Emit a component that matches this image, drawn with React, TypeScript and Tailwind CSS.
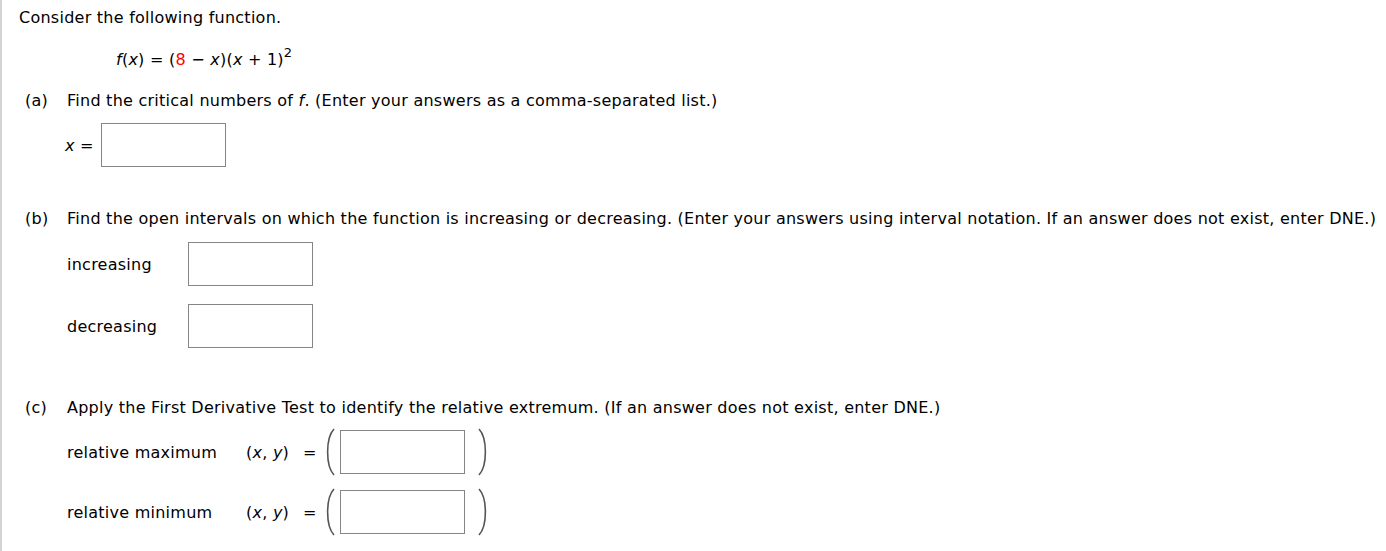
import React from 'react';

const font = { fontFamily: '"DejaVu Sans", Verdana, sans-serif' };

function Box({ className = '' }: { className?: string }) {
  return <div className={`h-[44px] w-[125px] border border-[#858585] bg-white ${className}`} />;
}

function Paren({ flip = false }: { flip?: boolean }) {
  return (
    <svg width="13" height="48" viewBox="0 0 13 48" className={flip ? '-scale-x-100' : ''}>
      <path d="M11 1 C 2.5 10, 2.5 38, 11 47" fill="none" stroke="#555" strokeWidth="1.6" />
    </svg>
  );
}

function Part({ tag, children }: { tag: string; children: React.ReactNode }) {
  return (
    <div className="flex h-[19px] items-center whitespace-nowrap pl-[23px]">
      <span className="w-[42px]">{tag}</span>
      <span>{children}</span>
    </div>
  );
}

function PointRow({ label }: { label: string }) {
  return (
    <div className="flex items-center pl-[65px]">
      <span className="w-[179px]">{label}</span>
      <span className="w-[57px]">
        (<i>x</i>, <i>y</i>)
      </span>
      <span className="w-[20px]">=</span>
      <Paren />
      <Box className="ml-[4px] mr-[12px]" />
      <Paren flip />
    </div>
  );
}

export default function App() {
  return (
    <div
      style={font}
      className="min-h-[551px] overflow-hidden border-l-2 border-[#d3d3d3] bg-white text-[16px] leading-[19px] tracking-[0.25px] text-black"
    >
      <div className="flex flex-col">
        <div className="mt-[8px] h-[19px] pl-[17px]">Consider the following function.</div>

        <div className="mt-[23px] h-[19px] pl-[114px]">
          <i>f</i>(<i>x</i>) = (<span className="text-[#ff0000]">8</span> − <i>x</i>)(<i>x</i> + 1)
          <sup className="relative -top-[8px] text-[13px]">2</sup>
        </div>

        <div className="mt-[22px]">
          <Part tag="(a)">
            Find the critical numbers of <i>f</i>. (Enter your answers as a comma-separated list.)
          </Part>
        </div>

        <div className="mt-[13px] flex items-center pl-[63px]">
          <span className="w-[36px]">
            <i>x</i> =
          </span>
          <Box />
        </div>

        <div className="mt-[42px]">
          <Part tag="(b)">
            Find the open intervals on which the function is increasing or decreasing. (Enter your answers
            using interval notation. If an answer does not exist, enter DNE.)
          </Part>
        </div>

        <div className="mt-[14px] flex items-center pl-[65px]">
          <span className="w-[121px]">increasing</span>
          <Box />
        </div>
        <div className="mt-[18px] flex items-center pl-[65px]">
          <span className="w-[121px]">decreasing</span>
          <Box />
        </div>

        <div className="mt-[50px]">
          <Part tag="(c)">
            Apply the First Derivative Test to identify the relative extremum. (If an answer does not exist,
            enter DNE.)
          </Part>
        </div>

        <div className="mt-[11px]">
          <PointRow label="relative maximum" />
        </div>
        <div className="mt-[12px]">
          <PointRow label="relative minimum" />
        </div>
      </div>
    </div>
  );
}
